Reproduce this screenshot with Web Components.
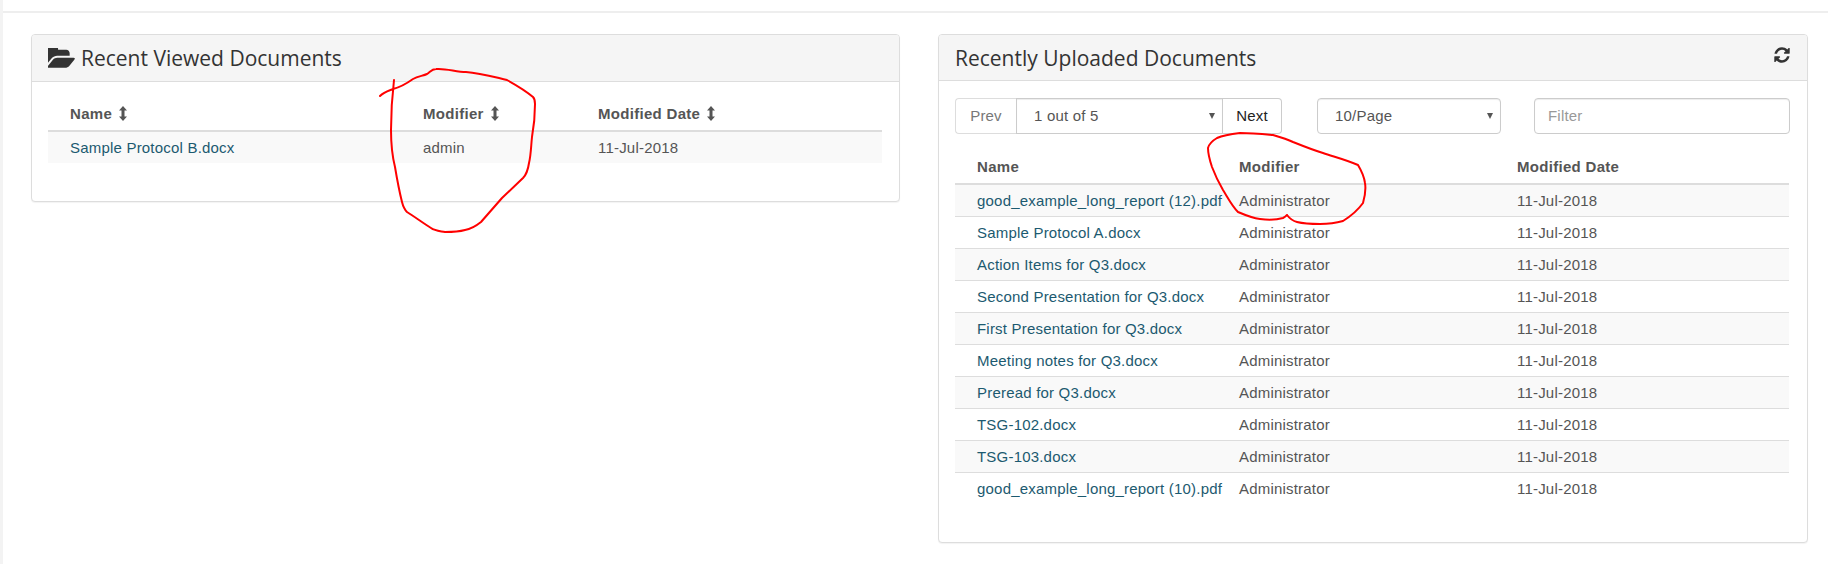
<!DOCTYPE html>
<html lang="en">
<head>
<meta charset="utf-8">
<title>Documents</title>
<style>
  html, body { margin: 0; padding: 0; background: #fff; }
  body { font: 14px "Liberation Sans", Arial, sans-serif; color: #555; }
</style>
</head>
<body>
<doc-shell>
  <doc-panel title="Recent Viewed Documents" icon="folder">
    <doc-table style="--cols: 353px 175px 306px; margin: 15px 17px 38px 16px;">
      <doc-row head>
        <doc-cell head sort>Name</doc-cell>
        <doc-cell head sort>Modifier</doc-cell>
        <doc-cell head sort>Modified Date</doc-cell>
      </doc-row>
      <doc-row striped>
        <doc-cell link>Sample Protocol B.docx</doc-cell>
        <doc-cell>admin</doc-cell>
        <doc-cell>11-Jul-2018</doc-cell>
      </doc-row>
    </doc-table>
  </doc-panel>

  <doc-panel title="Recently Uploaded Documents" refresh style="--head-height: 45px;">
    <doc-toolbar></doc-toolbar>
    <doc-table style="--cols: 262px 278px 294px; margin: 0 18px 38px 16px;">
      <doc-row head>
        <doc-cell head>Name</doc-cell>
        <doc-cell head>Modifier</doc-cell>
        <doc-cell head>Modified Date</doc-cell>
      </doc-row>
      <doc-row striped ruled><doc-cell link>good_example_long_report (12).pdf</doc-cell><doc-cell>Administrator</doc-cell><doc-cell>11-Jul-2018</doc-cell></doc-row>
      <doc-row ruled><doc-cell link>Sample Protocol A.docx</doc-cell><doc-cell>Administrator</doc-cell><doc-cell>11-Jul-2018</doc-cell></doc-row>
      <doc-row striped ruled><doc-cell link>Action Items for Q3.docx</doc-cell><doc-cell>Administrator</doc-cell><doc-cell>11-Jul-2018</doc-cell></doc-row>
      <doc-row ruled><doc-cell link>Second Presentation for Q3.docx</doc-cell><doc-cell>Administrator</doc-cell><doc-cell>11-Jul-2018</doc-cell></doc-row>
      <doc-row striped ruled><doc-cell link>First Presentation for Q3.docx</doc-cell><doc-cell>Administrator</doc-cell><doc-cell>11-Jul-2018</doc-cell></doc-row>
      <doc-row ruled><doc-cell link>Meeting notes for Q3.docx</doc-cell><doc-cell>Administrator</doc-cell><doc-cell>11-Jul-2018</doc-cell></doc-row>
      <doc-row striped ruled><doc-cell link>Preread for Q3.docx</doc-cell><doc-cell>Administrator</doc-cell><doc-cell>11-Jul-2018</doc-cell></doc-row>
      <doc-row ruled><doc-cell link>TSG-102.docx</doc-cell><doc-cell>Administrator</doc-cell><doc-cell>11-Jul-2018</doc-cell></doc-row>
      <doc-row striped ruled><doc-cell link>TSG-103.docx</doc-cell><doc-cell>Administrator</doc-cell><doc-cell>11-Jul-2018</doc-cell></doc-row>
      <doc-row><doc-cell link>good_example_long_report (10).pdf</doc-cell><doc-cell>Administrator</doc-cell><doc-cell>11-Jul-2018</doc-cell></doc-row>
    </doc-table>
  </doc-panel>
  <red-ink slot="ink"></red-ink>
</doc-shell>

<script>
const FOLDER = 'M1781 931q0 35-35 75l-336 396q-43 51-120.5 86.5t-143.5 35.5h-1088q-34 0-60.5-13t-26.5-43q0-35 35-75l336-396q43-51 120.5-86.5t143.5-35.5h1088q34 0 60.5 13t26.5 43zm-343-344v160h-832q-94 0-197 47.5t-164 119.5l-337 396-5 6q0-4-.5-12.5t-.5-12.5v-960q0-92 66-158t158-66h320q92 0 158 66t66 158v32h544q92 0 158 66t66 158z';
const REFRESH = 'M1639 1056q0 5-1 7-64 268-268 434.5t-478 166.5q-146 0-282.5-55t-243.5-157l-129 129q-19 19-45 19t-45-19-19-45v-448q0-26 19-45t45-19h448q26 0 45 19t19 45-19 45l-137 137q71 66 161 102t187 36q134 0 250-65t186-179q11-17 53-117 8-23 30-23h192q13 0 22.5 9.5t9.5 22.5zm25-800v448q0 26-19 45t-45 19h-448q-26 0-45-19t-19-45 19-45l138-138q-148-137-349-137-134 0-250 65t-186 179q-11 17-53 117-8 23-30 23h-199q-13 0-22.5-9.5t-9.5-22.5v-7q65-268 270-434.5t480-166.5q146 0 284 55.5t245 156.5l130-129q19-19 45-19t45 19 19 45z';

class docShell extends HTMLElement {
  constructor() {
    super();
    this.attachShadow({ mode: 'open' });
    this.shadowRoot.innerHTML = `
      <style>
        :host {
          display: block;
          position: relative;
          box-sizing: border-box;
          height: 564px;
          border-left: 3px solid #f3f3f3;
          overflow: hidden;
        }
        .rule { height: 11px; border-bottom: 2px solid #eee; }
        .columns {
          display: grid;
          grid-template-columns: 869px 870px;
          column-gap: 38px;
          align-items: start;
          padding: 21px 20px 0 28px;
        }
      </style>
      <div class="rule"></div>
      <div class="columns"><slot></slot></div>
      <slot name="ink"></slot>
    `;
  }
}
customElements.define('doc-shell', docShell);

class docPanel extends HTMLElement {
  constructor() {
    super();
    this.attachShadow({ mode: 'open' });
  }

  connectedCallback() {
    const icon = this.getAttribute('icon') === 'folder'
      ? `<svg class="folder" viewBox="0 256 1792 1280" preserveAspectRatio="none"><path d="${FOLDER}"/></svg>`
      : '';
    const refresh = this.hasAttribute('refresh')
      ? `<svg class="refresh" viewBox="0 0 1792 1792"><path d="${REFRESH}"/></svg>`
      : '';
    this.shadowRoot.innerHTML = `
      <style>
        :host {
          display: block;
          border: 1px solid #ddd;
          border-radius: 4px;
          background: #fff;
          box-shadow: 0 1px 1px rgba(0, 0, 0, .05);
        }
        header {
          display: flex;
          align-items: center;
          height: var(--head-height, 46px);
          padding: 0 16px 0 16px;
          background: #f5f5f5;
          border-bottom: 1px solid #ddd;
          border-radius: 3px 3px 0 0;
          color: #333;
        }
        h3 {
          margin: 0;
          font: 400 21px/26px "Open Sans", sans-serif;
          color: #333;
        }
        svg { fill: #333; display: block; flex: none; }
        .folder { width: 27px; height: 20px; margin-right: 6px; }
        .refresh { width: 18px; height: 18px; margin-left: auto; margin-top: -6px; }
      </style>
      <header>${icon}<h3>${this.getAttribute('title')}</h3>${refresh}</header>
      <slot></slot>
    `;
  }
}
customElements.define('doc-panel', docPanel);

class docToolbar extends HTMLElement {
  constructor() {
    super();
    this.attachShadow({ mode: 'open' });
    this.shadowRoot.innerHTML = `
      <style>
        :host {
          display: flex;
          align-items: stretch;
          height: 36px;
          margin: 17px 17px 16px 16px;
          font: 15px "Liberation Sans", Arial, sans-serif;
          letter-spacing: .2px;
          color: #555;
        }
        .btn, .pick, input {
          box-sizing: border-box;
          height: 36px;
          padding-bottom: 2px;
          background: #fff;
          font: inherit;
          letter-spacing: inherit;
        }
        .btn {
          display: flex;
          align-items: center;
          justify-content: center;
          border: 1px solid #ddd;
        }
        .prev { width: 61px; color: #777; border-radius: 4px 0 0 4px; border-right: 0; }
        .next { width: 59px; color: #222; border-radius: 0 4px 4px 0; border-left: 0; border-color: #ccc; }
        .pick {
          display: flex;
          align-items: center;
          justify-content: space-between;
          padding-left: 17px;
          padding-right: 7px;
          border: 1px solid #ccc;
          box-shadow: inset 0 1px 1px rgba(0, 0, 0, .075);
        }
        .page { width: 207px; }
        .size { width: 184px; margin-left: 35px; border-radius: 4px; }
        .pick i {
          width: 0;
          height: 0;
          margin-top: 2px;
          border: 3.5px solid transparent;
          border-top: 6px solid #555;
          border-bottom: 0;
        }
        input {
          width: 256px;
          margin-left: 33px;
          padding-left: 13px;
          padding-right: 13px;
          border: 1px solid #ccc;
          border-radius: 4px;
          box-shadow: inset 0 1px 1px rgba(0, 0, 0, .075);
          outline: 0;
        }
        input::placeholder { color: #999; opacity: 1; }
      </style>
      <div class="btn prev">Prev</div>
      <div class="pick page"><span>1 out of 5</span><i></i></div>
      <div class="btn next">Next</div>
      <div class="pick size"><span>10/Page</span><i></i></div>
      <input type="text" placeholder="Filter">
    `;
  }
}
customElements.define('doc-toolbar', docToolbar);

class docTable extends HTMLElement {
  constructor() {
    super();
    this.attachShadow({ mode: 'open' });
    this.shadowRoot.innerHTML = `
      <style>
        :host { display: block; }
      </style>
      <slot></slot>
    `;
  }
}
customElements.define('doc-table', docTable);

class docRow extends HTMLElement {
  constructor() {
    super();
    this.attachShadow({ mode: 'open' });
    this.shadowRoot.innerHTML = `
      <style>
        :host {
          display: grid;
          grid-template-columns: var(--cols);
          align-items: center;
          height: 31px;
        }
        :host([head]) { height: 27px; padding-bottom: 6px; border-bottom: 2px solid #ddd; align-items: end; }
        :host([striped]) { background: #f9f9f9; }
        :host([ruled]) { border-bottom: 1px solid #ddd; }
      </style>
      <slot></slot>
    `;
  }
}
customElements.define('doc-row', docRow);

class docCell extends HTMLElement {
  constructor() {
    super();
    this.attachShadow({ mode: 'open' });
    this.shadowRoot.innerHTML = `
      <style>
        :host {
          display: flex;
          align-items: center;
          gap: 7px;
          padding-left: 22px;
          font: 15px/20px "Liberation Sans", Arial, sans-serif;
          letter-spacing: .2px;
          color: #555;
          white-space: nowrap;
        }
        :host([head]) { font-weight: 700; letter-spacing: .3px; }
        :host([link]) { color: #1c5a70; }
        svg { display: none; width: 8px; height: 15px; fill: #555; }
        :host([sort]) svg { display: block; margin-top: -2px; }
      </style>
      <slot></slot>
      <svg viewBox="0 0 8 15"><path d="M4 0 8 4.500H5.500V10.500H8L4 15 0 10.500H2.500V4.500H0Z"/></svg>
    `;
  }
}
customElements.define('doc-cell', docCell);

// hand drawn circles on top of the screenshot
class redInk extends HTMLElement {
  constructor() {
    super();
    this.attachShadow({ mode: 'open' });
    this.shadowRoot.innerHTML = `
      <style>
        :host { position: absolute; left: -3px; top: 0; width: 1828px; height: 564px; pointer-events: none; }
        svg { display: block; }
        path { fill: none; stroke: #f00; stroke-width: 2; stroke-linejoin: round; stroke-linecap: round; }
      </style>
      <svg width="1828" height="564" viewBox="0 0 1828 564">
        <path d="M380 96C384 92 388 91 393 89C401 87 406 84 413 79C418 76 423 76 427 74C431 71 432 69 436 69C446 68 456 72 466 72C480 73 494 77 507 80C516 85 526 91 533 97C535 99 535 101 535 104C535 115 534 126 532 137C531 146 531 155 529 163C528 170 526 175 523 178L502 198L481 222C476 226 471 229 465 230C458 232 451 232 445 232C440 231 435 231 431 228C423 223 415 217 407 212C404 209 403 206 402 202C399 190 397 179 395 167C392 155 391 142 391 130C391 113 392 97 394 80"/>
        <path d="M1287 215C1290 219 1293 221 1297 222C1305 224 1312 224 1320 224C1328 224 1336 223 1343 221C1351 216 1358 210 1363 203C1365 196 1366 189 1365 183C1364 176 1361 170 1358 165C1347 160 1335 157 1323 153C1313 150 1303 146 1293 142C1287 139 1280 137 1273 135C1262 134 1251 133 1240 133C1232 134 1224 135 1217 138C1212 141 1209 144 1208 148C1208 155 1210 161 1212 167C1215 175 1219 183 1223 190C1228 198 1232 206 1238 212C1245 215 1252 218 1260 219C1268 220 1276 220 1283 218C1285 217 1286 216 1287 215"/>
      </svg>
    `;
  }
}
customElements.define('red-ink', redInk);
</script>
</body>
</html>
